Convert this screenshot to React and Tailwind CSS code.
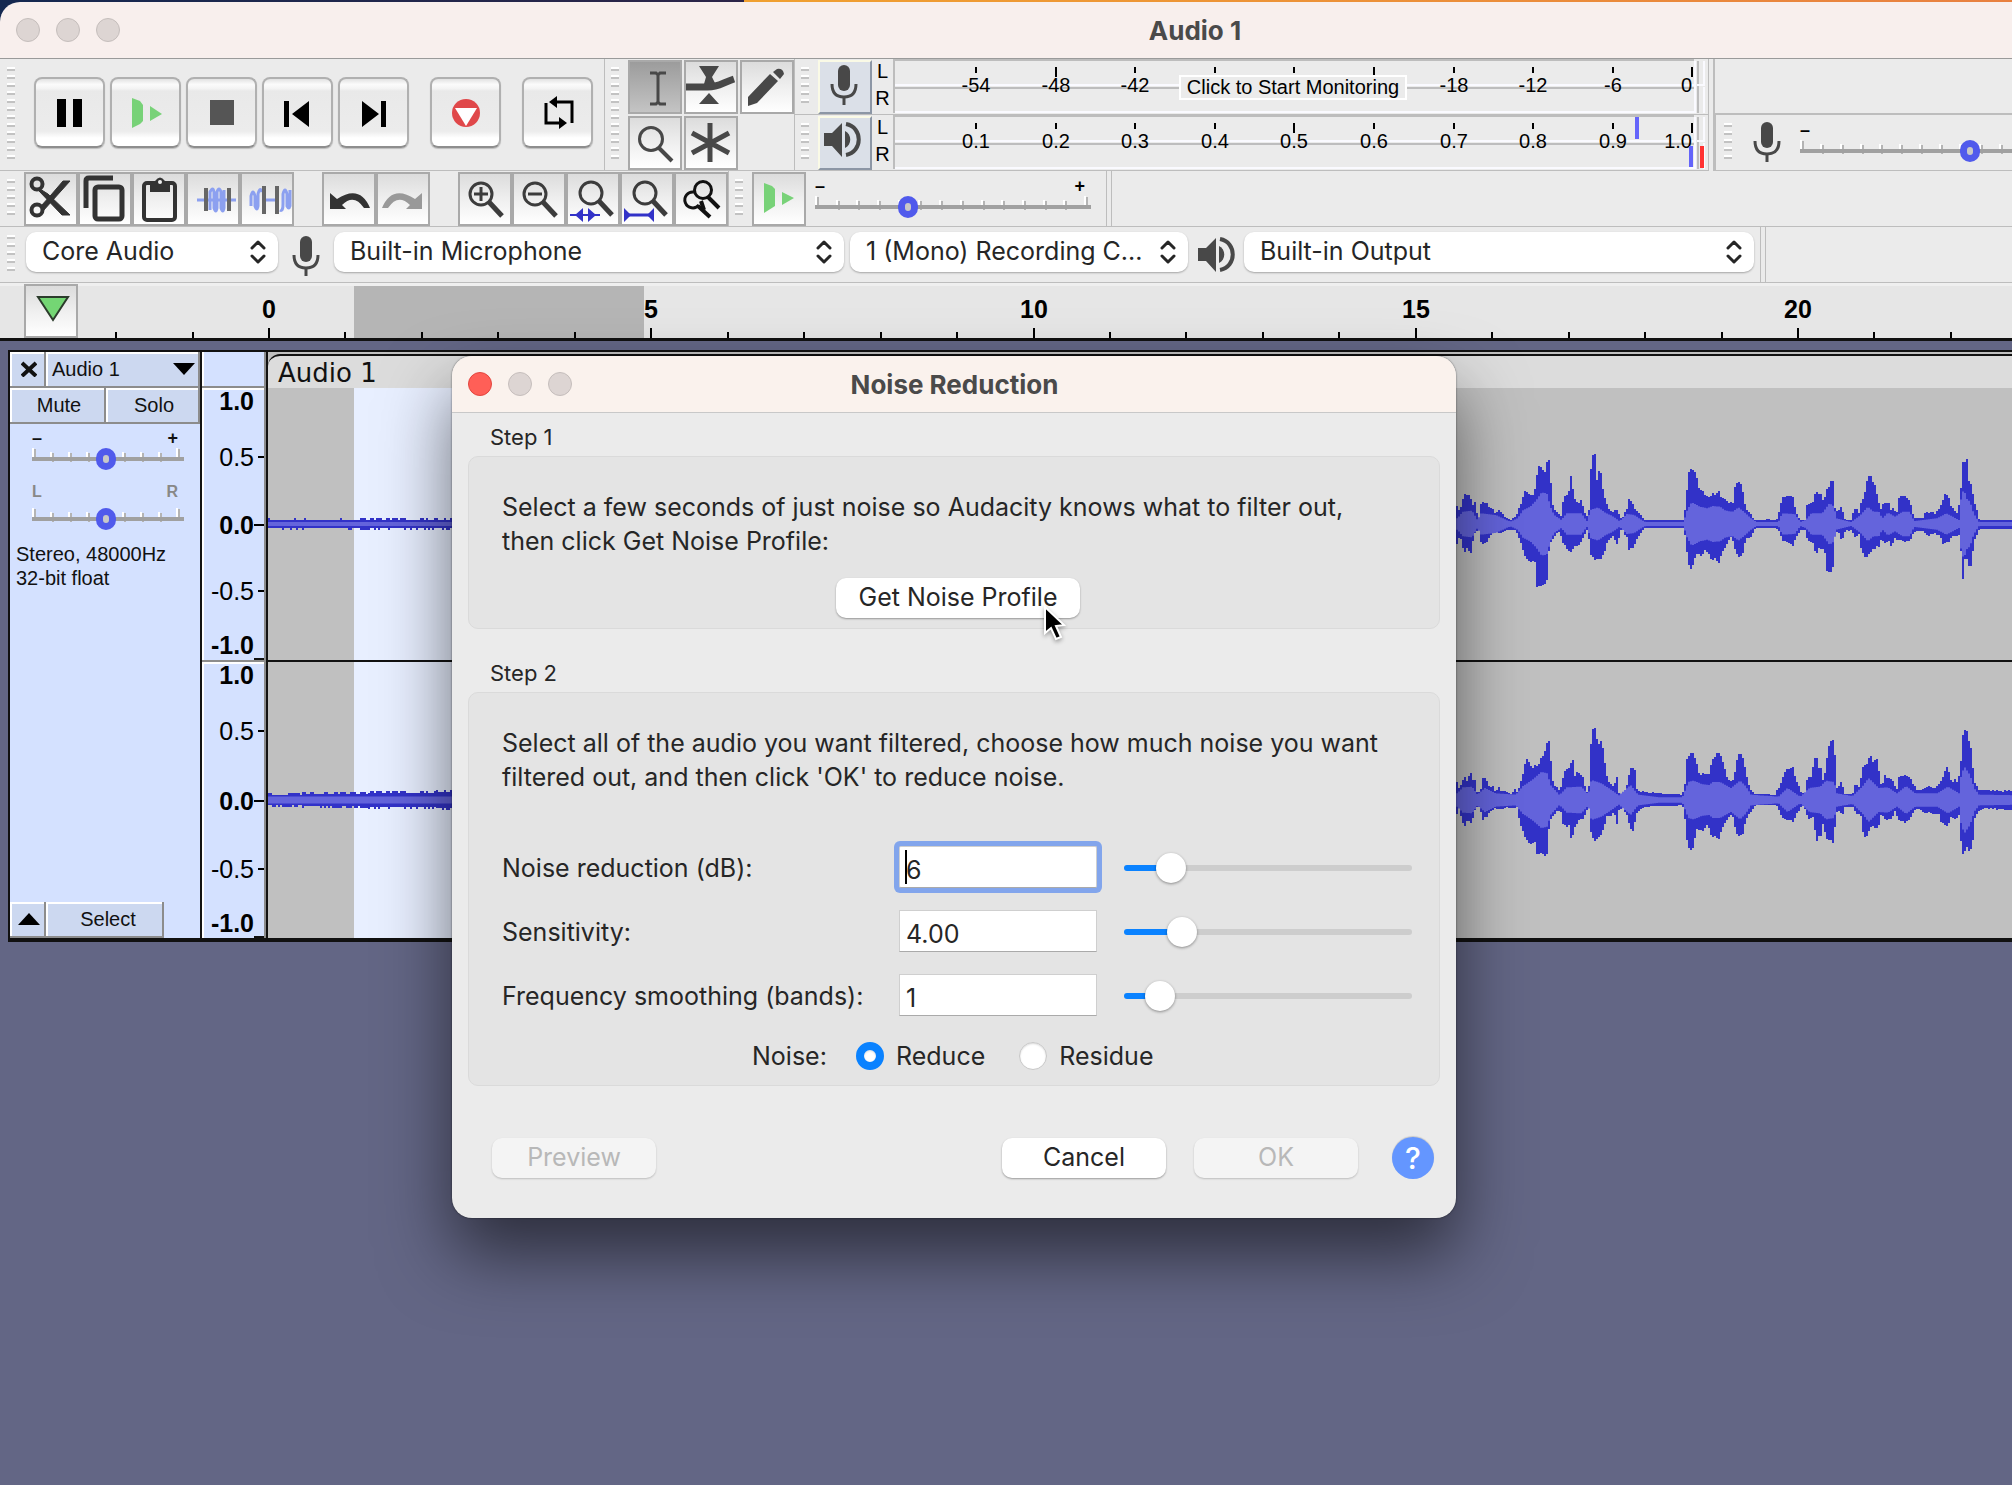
import React, { useState } from 'react';
import clsx from 'clsx';

const BLUE = '#3232c8';
const LIGHT_BLUE = '#6464dc';
const INK = '#484848';

// Clip envelopes: x/y pairs, y is measured around zero, 3 units to a pixel
const LEFT = {
  zero: 552,
  top: [45, 500, 52, 515, 60, 475, 66, 462, 75, 462, 80, 475, 90, 500, 96, 475, 98, 515, 105, 535, 110, 485, 125, 492, 140, 505, 150, 520, 158, 512, 170, 520, 180, 535, 190, 540, 205, 530, 215, 500, 222, 480, 232, 450, 240, 462, 250, 470, 258, 445, 264, 400, 270, 372, 278, 385, 285, 395, 288, 385, 293, 348, 300, 372, 303, 485, 308, 498, 315, 520, 320, 510, 328, 535, 332, 500, 338, 468, 350, 465, 352, 440, 358, 396, 361, 440, 368, 480, 380, 487, 387, 475, 390, 510, 400, 530, 405, 535, 407, 458, 412, 372, 418, 336, 425, 350, 428, 430, 433, 390, 442, 403, 445, 468, 453, 485, 460, 505, 470, 520, 480, 505, 487, 515, 490, 540, 500, 525, 508, 515, 516, 475, 525, 490, 535, 510, 550, 530, 560, 540, 665, 540, 668, 520, 675, 445, 680, 390, 687, 384, 700, 403, 705, 438, 715, 450, 725, 465, 735, 475, 745, 462, 755, 462, 760, 450, 768, 468, 780, 480, 790, 490, 800, 490, 806, 440, 812, 426, 826, 432, 830, 480, 838, 505, 850, 525, 860, 540, 893, 540, 896, 522, 900, 540, 916, 540, 918, 524, 922, 540, 928, 505, 938, 468, 960, 465, 965, 475, 972, 510, 980, 530, 985, 540, 998, 540, 1002, 500, 1012, 490, 1020, 485, 1027, 450, 1035, 460, 1043, 465, 1050, 485, 1055, 465, 1060, 432, 1065, 445, 1070, 420, 1079, 420, 1080, 510, 1090, 515, 1097, 500, 1103, 520, 1108, 540, 1125, 540, 1130, 515, 1138, 505, 1145, 520, 1152, 485, 1160, 470, 1165, 440, 1170, 408, 1176, 402, 1182, 420, 1190, 438, 1196, 465, 1202, 500, 1208, 510, 1212, 487, 1230, 487, 1233, 510, 1240, 500, 1248, 520, 1252, 515, 1256, 468, 1272, 468, 1280, 475, 1290, 500, 1297, 535, 1320, 535, 1328, 520, 1345, 515, 1355, 520, 1365, 505, 1375, 485, 1378, 462, 1390, 462, 1395, 490, 1405, 505, 1415, 520, 1422, 480, 1425, 450, 1430, 366, 1440, 366, 1444, 348, 1447, 420, 1455, 432, 1460, 480, 1467, 500, 1475, 540, 1600, 540],
  bottom: [45, 610, 52, 585, 60, 620, 62, 648, 70, 625, 85, 640, 88, 600, 92, 580, 105, 568, 110, 612, 125, 605, 135, 590, 145, 575, 165, 580, 180, 570, 205, 570, 215, 600, 225, 630, 235, 660, 250, 665, 258, 665, 260, 738, 275, 740, 290, 730, 295, 640, 300, 610, 310, 590, 325, 575, 335, 610, 345, 625, 358, 640, 365, 620, 380, 618, 390, 590, 400, 570, 406, 600, 408, 640, 420, 660, 440, 658, 448, 635, 455, 610, 468, 590, 475, 585, 480, 622, 487, 600, 492, 570, 500, 575, 510, 590, 515, 628, 530, 622, 535, 600, 550, 575, 560, 564, 665, 564, 672, 600, 677, 670, 687, 694, 694, 660, 700, 640, 712, 650, 722, 630, 735, 640, 740, 658, 750, 655, 763, 670, 770, 640, 780, 620, 795, 588, 802, 610, 810, 640, 820, 652, 830, 635, 835, 600, 850, 590, 862, 564, 920, 564, 930, 580, 938, 605, 965, 615, 975, 590, 985, 570, 998, 570, 1005, 600, 1020, 610, 1028, 650, 1035, 625, 1045, 628, 1055, 640, 1058, 695, 1074, 695, 1076, 650, 1080, 580, 1092, 575, 1099, 610, 1105, 575, 1125, 570, 1135, 590, 1145, 580, 1152, 630, 1160, 648, 1170, 650, 1180, 630, 1195, 620, 1198, 640, 1203, 600, 1215, 610, 1228, 605, 1236, 628, 1242, 595, 1260, 600, 1275, 608, 1285, 600, 1300, 572, 1325, 572, 1335, 590, 1350, 580, 1370, 590, 1375, 615, 1390, 605, 1405, 590, 1420, 585, 1426, 640, 1428, 700, 1433, 730, 1436, 660, 1445, 655, 1449, 700, 1455, 670, 1460, 610, 1470, 580, 1477, 566, 1600, 566],
  rms: [45, 535, 60, 515, 85, 512, 100, 540, 110, 520, 150, 525, 190, 545, 210, 535, 225, 510, 245, 500, 262, 480, 275, 458, 290, 460, 300, 500, 310, 525, 330, 540, 345, 520, 385, 520, 400, 544, 410, 510, 430, 502, 450, 518, 470, 528, 490, 544, 510, 522, 530, 525, 550, 540, 560, 546, 665, 546, 675, 510, 687, 487, 710, 500, 730, 505, 745, 498, 765, 500, 780, 512, 800, 515, 815, 502, 830, 515, 850, 535, 865, 546, 925, 546, 935, 520, 970, 522, 985, 546, 1000, 540, 1015, 520, 1045, 520, 1058, 500, 1065, 490, 1078, 500, 1083, 535, 1125, 546, 1150, 525, 1170, 500, 1185, 515, 1200, 515, 1210, 535, 1225, 518, 1245, 530, 1265, 515, 1285, 515, 1297, 543, 1360, 535, 1385, 520, 1420, 540, 1425, 480, 1433, 445, 1440, 475, 1450, 485, 1460, 520, 1475, 546, 1600, 546],
};

const RIGHT = {
  zero: 420,
  top: [45, 368, 50, 385, 60, 360, 65, 360, 68, 324, 71, 360, 78, 348, 85, 336, 89, 368, 96, 355, 98, 396, 108, 400, 112, 360, 118, 348, 125, 362, 133, 378, 145, 380, 150, 396, 158, 380, 165, 392, 182, 392, 190, 404, 198, 396, 205, 386, 210, 400, 216, 372, 225, 340, 232, 306, 238, 288, 242, 312, 250, 325, 260, 312, 266, 325, 272, 294, 282, 282, 288, 264, 293, 234, 300, 252, 303, 354, 312, 378, 320, 380, 326, 396, 332, 368, 340, 330, 352, 325, 356, 325, 358, 228, 361, 288, 366, 345, 370, 348, 375, 324, 380, 342, 388, 345, 392, 372, 400, 396, 405, 396, 408, 306, 412, 234, 418, 198, 426, 210, 430, 276, 435, 234, 442, 246, 448, 300, 455, 348, 462, 368, 475, 384, 480, 348, 486, 354, 488, 402, 500, 402, 508, 385, 515, 350, 517, 320, 535, 330, 537, 385, 545, 400, 555, 394, 600, 400, 660, 404, 668, 384, 675, 290, 683, 282, 688, 270, 696, 294, 705, 320, 708, 342, 728, 342, 735, 345, 738, 318, 750, 290, 760, 276, 770, 288, 776, 320, 785, 354, 795, 366, 805, 350, 808, 306, 818, 282, 826, 284, 834, 320, 842, 366, 850, 394, 862, 403, 893, 403, 896, 390, 900, 406, 915, 406, 920, 392, 930, 378, 938, 348, 945, 325, 958, 325, 962, 312, 968, 340, 978, 372, 988, 396, 998, 404, 1005, 350, 1018, 352, 1021, 294, 1030, 290, 1036, 320, 1045, 330, 1048, 370, 1055, 325, 1060, 270, 1072, 234, 1079, 246, 1082, 372, 1088, 390, 1099, 360, 1104, 400, 1128, 404, 1135, 375, 1148, 378, 1153, 340, 1159, 306, 1165, 325, 1176, 282, 1184, 306, 1198, 294, 1202, 360, 1210, 380, 1215, 338, 1220, 352, 1235, 355, 1242, 368, 1250, 390, 1256, 350, 1275, 344, 1285, 355, 1295, 370, 1303, 388, 1325, 388, 1340, 375, 1350, 388, 1362, 374, 1372, 360, 1380, 336, 1388, 318, 1395, 350, 1402, 366, 1410, 354, 1416, 372, 1424, 320, 1432, 210, 1441, 210, 1448, 246, 1455, 270, 1458, 325, 1464, 372, 1475, 390, 1600, 396],
  bottom: [45, 460, 50, 445, 58, 485, 64, 502, 74, 480, 85, 490, 92, 455, 98, 440, 108, 440, 112, 485, 120, 472, 132, 462, 145, 445, 165, 448, 182, 443, 210, 443, 216, 495, 228, 520, 234, 540, 250, 555, 258, 545, 260, 580, 278, 582, 284, 592, 291, 580, 294, 520, 302, 475, 312, 460, 328, 450, 334, 490, 345, 500, 352, 495, 353, 532, 360, 538, 366, 505, 380, 480, 390, 474, 400, 450, 406, 440, 408, 505, 414, 530, 420, 544, 430, 538, 441, 525, 446, 500, 456, 465, 462, 474, 475, 450, 482, 497, 488, 450, 500, 445, 510, 465, 516, 490, 524, 520, 530, 500, 536, 460, 548, 445, 560, 440, 662, 436, 670, 480, 676, 562, 688, 575, 694, 550, 700, 505, 710, 515, 725, 505, 732, 485, 738, 525, 762, 538, 770, 510, 780, 485, 797, 460, 804, 490, 812, 525, 827, 526, 834, 490, 845, 462, 862, 436, 920, 436, 930, 460, 940, 480, 966, 484, 975, 462, 990, 434, 1000, 450, 1008, 478, 1020, 470, 1025, 510, 1028, 550, 1035, 530, 1045, 525, 1048, 480, 1056, 538, 1070, 540, 1073, 556, 1078, 538, 1082, 462, 1095, 445, 1099, 485, 1104, 440, 1128, 440, 1140, 460, 1152, 470, 1158, 530, 1170, 525, 1180, 495, 1198, 508, 1205, 465, 1220, 480, 1235, 480, 1245, 455, 1256, 480, 1275, 488, 1290, 468, 1300, 448, 1325, 455, 1345, 460, 1365, 465, 1372, 490, 1390, 500, 1395, 474, 1410, 480, 1420, 465, 1426, 555, 1433, 592, 1440, 555, 1450, 580, 1457, 555, 1462, 480, 1472, 455, 1485, 445, 1600, 450],
  rms: [45, 400, 60, 382, 85, 380, 100, 404, 120, 384, 150, 400, 205, 404, 225, 378, 250, 360, 275, 336, 292, 340, 300, 375, 325, 405, 345, 382, 385, 380, 404, 404, 412, 360, 440, 370, 470, 392, 488, 406, 520, 375, 540, 404, 600, 412, 662, 412, 678, 366, 692, 362, 715, 372, 735, 375, 745, 366, 765, 366, 795, 384, 820, 362, 835, 378, 850, 404, 925, 410, 950, 384, 985, 410, 1010, 384, 1040, 380, 1055, 362, 1078, 366, 1085, 400, 1128, 408, 1155, 380, 1172, 354, 1200, 384, 1225, 382, 1250, 400, 1275, 378, 1300, 400, 1360, 400, 1390, 380, 1420, 400, 1426, 345, 1435, 320, 1450, 345, 1462, 385, 1475, 404, 1600, 406],
};

const SPEECH_START = 1172;
const UNITS_PER_PX = 2.741;

const sample = (points, x) => {
  for (let i = 2; i < points.length; i += 2) {
    if (x <= points[i]) {
      const t = Math.max(0, (x - points[i - 2]) / (points[i] - points[i - 2]));
      return points[i - 1] + t * (points[i + 1] - points[i - 1]);
    }
  }
  return points[points.length - 1];
};

const stepPath = (center, upper, lower) => {
  const cols = [];
  for (let x = 0; x < 1760; x += 2) cols.push(x);
  const top = cols.map((x) => `L${x} ${center - upper(x)}H${x + 2}`).join('');
  const bottom = [...cols].reverse().map((x) => `L${x + 2} ${center + lower(x)}H${x}`).join('');
  return `M0 ${center}${top}${bottom}Z`;
};

const noise = (x) => Math.abs(Math.sin(x * 12.9898) * 43758.5453) % 1;

function Waveform({ center, channel, quiet, growth }) {
  const level = (points, sign) => (x) => {
    if (x < SPEECH_START + 16) {
      const base = quiet + (growth * Math.min(x, 200)) / 200;
      const spiky = noise(x + sign) > (x > 90 ? 0.6 : 0.85 - growth * 0.1);
      return Math.round(base + (spiky ? 2 : 0));
    }
    const raw = Math.abs(sample(points, (x - SPEECH_START) * UNITS_PER_PX) - channel.zero) / 3;
    return Math.round(raw > 7 ? raw + (noise(x) - 0.5) * 2 : raw);
  };
  const rms = (x) => {
    if (x < SPEECH_START + 16) return 2 + growth / 2;
    return (channel.zero - sample(channel.rms, (x - SPEECH_START) * UNITS_PER_PX)) / 3;
  };
  return (
    <g>
      <path d={stepPath(center, level(channel.top, 1), level(channel.bottom, 2))} fill={BLUE} />
      <path d={stepPath(center, rms, rms)} fill={LIGHT_BLUE} />
    </g>
  );
}

function Grip({ tall }) {
  return (
    <div
      className={clsx(
        'w-2 shrink-0 bg-[repeating-linear-gradient(to_bottom,#ffffff_0_2px,#c2c2c2_2px_4px,transparent_4px_8px)]',
        tall ? 'h-[92px]' : 'h-[36px]'
      )}
    />
  );
}

function TransportButton({ label, className, children }) {
  return (
    <button
      aria-label={label}
      className={clsx(
        'size-[71px] shrink-0 rounded-lg border-2 border-[#b0b0b0] border-b-[#8e8e8e] bg-[linear-gradient(#e2e2e2,#fbfbfb_8%,#f4f4f4_14%,#e9e9e9_18%,#ececec_78%,#ffffff_88%,#ffffff)] shadow-[0_1px_1px_rgba(0,0,0,0.2)]',
        className
      )}
    >
      <svg viewBox="2 2 67 67" className="size-full">{children}</svg>
    </button>
  );
}

function ToolButton({ label, active, children }) {
  return (
    <button
      aria-label={label}
      className={clsx(
        'size-[54px] shrink-0 border-2 border-[#a9a9a9]',
        active
          ? 'bg-linear-to-b from-[#9c9c9c] to-[#c4c4c4]'
          : 'bg-linear-to-b from-[#dcdcdc] via-[#efefef] to-white'
      )}
    >
      <svg viewBox="2 2 50 50" className="size-full" fill="none">{children}</svg>
    </button>
  );
}

function MicShape() {
  return (
    <g stroke={INK} fill="none">
      <rect x="20" y="5" width="12" height="26" rx="6" fill={INK} stroke="none" />
      <path d="M14 24C14 34 19 37 26 37S38 34 38 24" strokeWidth="3" />
      <path d="M26 37V45" strokeWidth="3" />
    </g>
  );
}

function SpeakerShape() {
  return (
    <g stroke={INK} fill="none">
      <path d="M6 17H14L24 7V41L14 30H6Z" fill={INK} stroke="none" />
      <path d="M27 15C34 18 34 29 27 32Z" fill={INK} stroke="none" />
      <path d="M28 8C45 11 45 36 28 39" strokeWidth="4" />
    </g>
  );
}

function PlayShape() {
  return (
    <g fill="#78d278">
      <path d="M12 11L20 14L23 17V34L12 41Z" />
      <path d="M30 20L42 26L30 33Z" />
    </g>
  );
}

function Lens({ cx = 23, cy = 22, r = 11, children }) {
  return (
    <g stroke="#3c3c3c">
      <circle cx={cx} cy={cy} r={r} strokeWidth="3" />
      <path d={`M${cx + 8} ${cy + 8}L${cx + 21} ${cy + 22}`} strokeWidth="5" />
      {children}
    </g>
  );
}

function Ticks({ count, width }) {
  const step = (width - 10) / (count - 1);
  return (
    <svg className="h-[22px] w-full [grid-area:1/1]" aria-hidden="true">
      {Array.from({ length: count }, (_, i) => {
        const x = Math.round(2 + i * step);
        const y = i === 0 || i === count - 1 ? 0 : 4;
        return (
          <g key={i}>
            <rect x={x - 2} y={y} width="2" height="9" fill="#fff" />
            <rect x={x} y={y + 1} width="2" height="9" fill="#b4b4b4" />
          </g>
        );
      })}
      <rect y="9" width="100%" height="4" fill="#a0a0a0" />
    </svg>
  );
}

function MeterSlider({ label, value, count, width }) {
  const [v, setV] = useState(value);
  return (
    <div className="grid w-full">
      <Ticks count={count} width={width} />
      <input
        type="range"
        aria-label={label}
        value={v}
        step="0.1"
        onChange={(e) => setV(e.target.value)}
        className="h-[22px] w-full appearance-none bg-transparent [grid-area:1/1] [&::-webkit-slider-thumb]:h-[22px] [&::-webkit-slider-thumb]:w-5 [&::-webkit-slider-thumb]:appearance-none [&::-webkit-slider-thumb]:rounded-full [&::-webkit-slider-thumb]:border-[7px] [&::-webkit-slider-thumb]:border-[#505aec] [&::-webkit-slider-thumb]:bg-[#c8c8c8]"
      />
    </div>
  );
}

function Meter({ label, icon, ticks, long, hidden = [], children }) {
  return (
    <div className="flex h-14 border-b border-[#bdbdbd] pl-1.5">
      <div className="pt-2"><Grip /></div>
      <button
        aria-label={label}
        className="mt-px ml-[9px] size-[54px] border-2 border-t-[#fafae6] border-r-[#8c96a5] border-b-[#8c96a5] border-l-[#fafae6] bg-[#dbe0e8]"
      >
        <svg viewBox="2 2 50 50" className="size-full">{icon}</svg>
      </button>
      <div className="flex w-[21px] flex-col items-center text-xl leading-6">
        <span className="h-[27px]">L</span>
        <span>R</span>
      </div>
      <svg className="h-[55px] w-[812px]" fontSize="20">
        <path d="M1 54V1H801" stroke="#bdbdbd" strokeWidth="2" fill="none" />
        <path d="M2 26H801M2 53H802V2" stroke="#fafaff" strokeWidth="2" fill="none" />
        <path d="M0 29H801" stroke="#bdbdbd" strokeWidth="2" />
        <path d="M805 54V2" stroke="#bdbdbd" strokeWidth="2" />
        <path d="M804 26H811V2M811 28V54" stroke="#fafaff" strokeWidth="2" fill="none" />
        {ticks.map((t, i) => {
          const x = 83 + Math.round(i * 79.6);
          return (
            <g key={t}>
              <rect x={x - 1} y="8" width="2" height={long.includes(i) ? 10 : 6} />
              {!hidden.includes(i) && (
                <text x={x} y="33" textAnchor={i === ticks.length - 1 ? 'end' : 'middle'}>{t}</text>
              )}
            </g>
          );
        })}
        {children}
      </svg>
    </div>
  );
}

function Picker({ label, value, className }) {
  return (
    <div className={clsx('relative h-10', className)}>
      <select
        aria-label={label}
        className="h-10 w-full appearance-none rounded-[10px] bg-white pl-4 text-[25px] text-[#262626] shadow-[0_1px_2px_rgba(0,0,0,0.3)]"
      >
        <option>{value}</option>
      </select>
      <svg className="pointer-events-none absolute top-2 right-3 h-6 w-4" fill="none" stroke="#262626" strokeWidth="3" strokeLinecap="round" strokeLinejoin="round">
        <path d="M2 8L8 2L14 8M2 16L8 22L14 16" />
      </svg>
    </div>
  );
}

function Toolbars() {
  return (
    <div className="bg-[#ebebeb]">
      <div className="flex">
        <div className="flex h-28 w-[605px] shrink-0 border-r border-b border-[#bdbdbd] pl-[7px]">
          <div className="pt-2"><Grip tall /></div>
          <div className="flex gap-[5px] pt-[18px] pl-[19px]">
            <TransportButton label="Pause">
              <path d="M23 22H32V50H23ZM39 22H48V50H39Z" />
            </TransportButton>
            <TransportButton label="Play">
              <path d="M22 21L30 24L33 28V44L30 47L22 51ZM40 29L52 37L40 44Z" fill="#78d278" />
            </TransportButton>
            <TransportButton label="Stop">
              <path d="M24 23H48V48H24Z" fill="#555" />
            </TransportButton>
            <TransportButton label="Skip to Start">
              <path d="M22 24H27V50H22ZM47 24V50L30 37Z" />
            </TransportButton>
            <TransportButton label="Skip to End">
              <path d="M43 24H48V50H43ZM24 24V50L41 37Z" />
            </TransportButton>
            <TransportButton label="Record" className="ml-4">
              <circle cx="36" cy="36" r="14" fill="#e0484a" />
              <path d="M25 31H47L36 49Z" fill="#fff" />
            </TransportButton>
            <TransportButton label="Loop" className="ml-4">
              <path d="M24 26V46H41M50 46V25H32" fill="none" stroke="#000" strokeWidth="3" />
              <path d="M37 40L45 46L37 52ZM35 19L27 25L35 31Z" />
            </TransportButton>
          </div>
        </div>

        <div className="flex h-28 w-[190px] shrink-0 border-r border-b border-[#bdbdbd] pl-1.5">
          <div className="pt-2"><Grip tall /></div>
          <div className="grid grid-cols-3 content-start gap-0.5 pt-px pl-[9px]">
            <ToolButton label="Selection Tool" active>
              <path d="M22 13H28L30 15L32 13H38M22 44H28L30 42L32 44H38M30 14V43" stroke={INK} strokeWidth="3" />
            </ToolButton>
            <ToolButton label="Envelope Tool">
              <path d="M15 6H35L28 17L31 23L26 28H22L20 24L22 17ZM25 33L35 44H15Z" fill={INK} />
              <path d="M2 27H24C34 27 38 23 50 19" stroke={INK} strokeWidth="7" />
            </ToolButton>
            <ToolButton label="Draw Tool">
              <path d="M8 46V37L30 14L38 21L17 43ZM33 12L37 9Q43 8 44 14L40 19Z" fill={INK} />
            </ToolButton>
            <ToolButton label="Zoom Tool">
              <g stroke={INK}>
                <circle cx="23" cy="23" r="11.5" strokeWidth="3" />
                <path d="M31 32L44 45" strokeWidth="4" />
              </g>
            </ToolButton>
            <ToolButton label="Multi-Tool">
              <path d="M26 7V46M8 17L45 37M45 17L8 37" stroke={INK} strokeWidth="5" />
            </ToolButton>
          </div>
        </div>

        <div className="w-[914px] shrink-0 border-r border-[#bdbdbd]">
          <Meter
            label="Record Meter"
            icon={<MicShape />}
            ticks={['-54', '-48', '-42', '-36', '-30', '-24', '-18', '-12', '-6', '0']}
            long={[1, 5, 9]}
            hidden={[3, 4, 5]}
          >
            <rect x="287" y="17" width="226" height="23" fill="#ebebeb" stroke="#fff" strokeWidth="2" />
            <text x="400" y="35" textAnchor="middle">Click to Start Monitoring</text>
          </Meter>
          <Meter
            label="Playback Meter"
            icon={<SpeakerShape />}
            ticks={['0.1', '0.2', '0.3', '0.4', '0.5', '0.6', '0.7', '0.8', '0.9', '1.0']}
            long={[4, 9]}
          >
            <rect x="742" y="2" width="4" height="22" fill="#6464fa" />
            <rect x="796" y="31" width="4" height="21" fill="#6464fa" />
            <rect x="807" y="31" width="4" height="22" fill="#ff3232" />
          </Meter>
        </div>

        <div className="ml-1 min-w-0 flex-1 overflow-hidden border-l-2 border-[#bdbdbd]">
          <div className="h-14 border-b-2 border-[#bdbdbd]" />
          <div className="flex h-14 border-b border-l border-[#bdbdbd] pl-2">
            <div className="pt-2"><Grip /></div>
            <svg className="mt-0.5 ml-[9px] h-[54px] w-[54px] shrink-0" aria-hidden="true"><MicShape /></svg>
            <div className="w-[300px] shrink-0 pt-[5px] pl-[5px]">
              <div className="h-5 text-lg leading-5 font-bold">–</div>
              <MeterSlider label="Recording Volume" value={58.2} count={16} width={308} />
            </div>
          </div>
        </div>
      </div>

      <div className="flex h-14 border-b border-[#bdbdbd] pl-[7px]">
        <div className="pt-2"><Grip /></div>
        <div className="flex pt-px pl-[9px]">
          <ToolButton label="Cut">
            <g stroke="#333">
              <circle cx="13" cy="12" r="5.5" strokeWidth="4" />
              <circle cx="13" cy="38" r="5.5" strokeWidth="4" />
              <path d="M17 34L27 23L39 9H46L19 39ZM16 17L24 22L46 43H38L15 19Z" fill="#333" strokeWidth="1" />
            </g>
          </ToolButton>
          <ToolButton label="Copy">
            <path d="M8 36V9Q8 6 11 6H35" stroke="#333" strokeWidth="5" />
            <rect x="17" y="15" width="27" height="32" rx="3" stroke="#333" strokeWidth="5" />
          </ToolButton>
          <ToolButton label="Paste">
            <rect x="12" y="11" width="31" height="37" rx="3" stroke="#333" strokeWidth="4" />
            <path d="M18 9H23Q28 2 33 9H38V20H18Z" fill="#333" />
            <circle cx="28" cy="10" r="2" fill="#eee" />
          </ToolButton>
          <ToolButton label="Trim">
            <path d="M11 28H50" stroke="#8ca0f0" strokeWidth="3" />
            <path d="M24 38V20Q27 14 28 20V36Q30 42 31 36V20Q33 14 35 20V36Q37 42 38 36V18" stroke="#8ca0f0" strokeWidth="3" />
            <path d="M20 16V39M43 16V39" stroke="#666" strokeWidth="4" />
          </ToolButton>
          <ToolButton label="Silence">
            <path d="M11 34V24Q13 16 15 24V34Q17 40 18 34V22Q20 14 22 20M24 28H37M40 38Q43 40 43 32V22Q45 14 47 22V34Q49 38 50 34V18" stroke="#8ca0f0" strokeWidth="3" />
            <path d="M24 14V42M37 14V42" stroke="#666" strokeWidth="4" />
          </ToolButton>
        </div>
        <div className="flex pt-px pl-7">
          <ToolButton label="Undo">
            <path d="M8 21V37H24L20 33Q32 21 42 36H48Q38 12 15 27Z" fill="#333" />
          </ToolButton>
          <ToolButton label="Redo">
            <path d="M46 21V37H30L34 33Q22 21 12 36H6Q16 12 39 27Z" fill="#999" />
          </ToolButton>
        </div>
        <div className="flex border-r border-[#bdbdbd] pt-px pl-7">
          <ToolButton label="Zoom In">
            <Lens><path d="M16 22H30M23 15V29" strokeWidth="3" /></Lens>
          </ToolButton>
          <ToolButton label="Zoom Out">
            <Lens><path d="M16 22H30" strokeWidth="3" /></Lens>
          </ToolButton>
          <ToolButton label="Fit Selection">
            <Lens cx={25} cy={21} />
            <path d="M4 43H34" stroke={BLUE} strokeWidth="2" />
            <path d="M9 43L17 36V50ZM30 43L22 36V50Z" fill={BLUE} />
          </ToolButton>
          <ToolButton label="Fit Project">
            <Lens cx={25} cy={21} />
            <path d="M4 43H34" stroke={BLUE} strokeWidth="3" />
            <path d="M4 36V50L11 43ZM34 36V50L27 43Z" fill={BLUE} />
          </ToolButton>
          <ToolButton label="Zoom Toggle">
            <g stroke="#111">
              <path d="M20 20A8 8 0 1 0 25 33" strokeWidth="3" />
              <path d="M24 34L36 45" strokeWidth="4" />
              <circle cx="29" cy="18" r="8.5" strokeWidth="3" />
              <path d="M34 25L45 36M27 29L30 38" strokeWidth="4" />
            </g>
          </ToolButton>
        </div>
        <div className="flex pl-1.5">
          <div className="pt-2"><Grip /></div>
          <div className="pt-px pl-[9px]">
            <ToolButton label="Play at Speed"><PlayShape /></ToolButton>
          </div>
          <div className="w-[285px] pt-[5px] pl-[9px]">
            <div className="flex h-5 justify-between pr-1.5 text-lg leading-5 font-bold"><span>–</span><span>+</span></div>
            <MeterSlider label="Playback Speed" value={32.4} count={14} width={279} />
          </div>
        </div>
        <div className="ml-[15px] w-1.5 border-x border-[#bdbdbd]" />
      </div>

      <div className="flex h-14 border-b border-[#bdbdbd] pl-[7px]">
        <div className="pt-2"><Grip /></div>
        <div className="flex pt-[5px] pl-[11px]">
          <Picker label="Audio Host" value="Core Audio" className="w-[252px]" />
          <svg className="mx-0.5 h-[50px] w-[52px]" viewBox="0 1 52 50" aria-hidden="true"><MicShape /></svg>
          <Picker label="Recording Device" value="Built-in Microphone" className="w-[510px]" />
          <Picker label="Recording Channels" value="1 (Mono) Recording C..." className="ml-1.5 w-[338px]" />
          <svg className="mx-0.5 h-[50px] w-[52px]" viewBox="-2 1 52 50" aria-hidden="true"><SpeakerShape /></svg>
          <Picker label="Playback Device" value="Built-in Output" className="w-[510px]" />
        </div>
        <div className="ml-1.5 w-1.5 border-x border-[#bdbdbd]" />
      </div>
    </div>
  );
}

function Timeline() {
  const ticks = Array.from({ length: 27 }, (_, i) => i - 3);
  return (
    <div className="flex h-[58px] border-b-[3px] border-[#111] bg-[#e6e6e6]">
      <svg className="h-[55px] w-full">
        <rect width="100%" height="3" fill="#efefef" />
        <rect x="354" y="3" width="290" height="52" fill="#b5b5b5" />
        {ticks.map((t) => {
          const x = 269 + Math.round(t * 76.45);
          const major = t % 5 === 0;
          return (
            <g key={t}>
              <rect x={x - 1} y={major ? 45 : 49} width="2" height="10" />
              {major && (
                <text x={x} y="35" textAnchor="middle" fontSize="25" fontWeight="700">{t}</text>
              )}
            </g>
          );
        })}
      </svg>
      <div className="absolute mt-px ml-6">
        <ToolButton label="Pinned Play Head">
          <path d="M14 13H44L29 36Z" fill="#74d674" stroke="#2c3c2c" strokeWidth="2" />
        </ToolButton>
      </div>
    </div>
  );
}

function PanelButton({ label, className, children }) {
  return (
    <button
      aria-label={label}
      className={clsx(
        'flex items-center border-r-2 border-b-2 border-[#8c8c8c] bg-[#ccd8f0] text-xl shadow-[inset_2px_2px_0_#fff]',
        className
      )}
    >
      {children}
    </button>
  );
}

function TrackPanel() {
  return (
    <div className="flex w-[192px] shrink-0 flex-col border-r-2 border-[#141414] bg-[#d4e1ff] text-[#111]">
      <div className="flex h-9">
        <PanelButton label="Close" className="w-9 justify-center pl-1">
          <svg className="size-4" stroke="#111" strokeWidth="4"><path d="M1 2L15 15M15 2L1 15" /></svg>
        </PanelButton>
        <PanelButton className="flex-1 justify-between pr-0.5 pl-1.5">
          Audio 1
          <svg className="h-3 w-6"><path d="M1 0H23L12 12Z" /></svg>
        </PanelButton>
      </div>
      <div className="flex h-9">
        <PanelButton className="w-24 justify-center pl-1">Mute</PanelButton>
        <PanelButton className="flex-1 justify-center pl-1">Solo</PanelButton>
      </div>
      <div className="w-[174px] pt-1 pl-[22px]">
        <div className="flex h-5 justify-between pr-1.5 text-lg leading-5 font-bold"><span>–</span><span>+</span></div>
        <MeterSlider label="Gain" value={48.5} count={9} width={154} />
        <div className="mt-3 flex h-[26px] justify-between pr-1.5 text-base leading-5 font-bold text-[#888]"><span>L</span><span>R</span></div>
        <MeterSlider label="Pan" value={48.5} count={9} width={154} />
      </div>
      <p className="mt-3 pl-1.5 text-xl leading-6">Stereo, 48000Hz<br />32-bit float</p>
      <div className="mt-auto flex h-9">
        <PanelButton label="Collapse" className="w-9 justify-center pl-1">
          <svg className="h-3 w-6"><path d="M1 12H23L12 0Z" /></svg>
        </PanelButton>
        <PanelButton className="w-[118px] justify-center pl-2">Select</PanelButton>
      </div>
    </div>
  );
}

const SCALE = [
  { text: '1.0', y: 49 },
  { text: '0.5', y: 105, tick: 6 },
  { text: '0.0', y: 173, tick: 10 },
  { text: '-0.5', y: 239, tick: 6 },
  { text: '-1.0', y: 293 },
  { text: '1.0', y: 323 },
  { text: '0.5', y: 379, tick: 6 },
  { text: '0.0', y: 449, tick: 10 },
  { text: '-0.5', y: 517, tick: 6 },
  { text: '-1.0', y: 571 },
];

function Track() {
  return (
    <div className="mt-[9px] ml-2 flex h-[592px] border-t-2 border-b-4 border-l-2 border-[#111]">
      <TrackPanel />
      <svg className="h-full w-[66px] shrink-0 bg-[#d4e1ff]" fontSize="25">
        <path d="M1 0V586" stroke="#fff" strokeWidth="2" />
        <path d="M0 35H62M0 309H62" stroke="#8c8c8c" strokeWidth="2" />
        <path d="M2 37H62M2 311H62" stroke="#fff" strokeWidth="2" />
        <path d="M63 0V586" stroke="#8c8c8c" strokeWidth="2" />
        <path d="M65 0V586" stroke="#111" strokeWidth="2" />
        <path d="M52 307H62M52 585H62" stroke="#111" strokeWidth="2" />
        {SCALE.map((s) => (
          <g key={s.y}>
            <text x="52" y={s.y + 9} textAnchor="end" fontWeight={s.text.endsWith('.5') ? 400 : 700}>{s.text}</text>
            {s.tick && <rect x={62 - s.tick} y={s.y - 1} width={s.tick} height="2" />}
          </g>
        ))}
      </svg>
      <div className="min-w-0 flex-1 bg-[#c0c0c0] pt-0.5">
        <div className="h-[34px] rounded-tl-xl border-t-2 border-[#111] bg-[#dcdcdc] pl-2.5 font-['DejaVu_Sans'] text-[26px] leading-[34px] text-[#111]">
          Audio 1
        </div>
        <svg className="h-[550px] w-full">
          <rect x="86" width="289" height="100%" fill="#e8efff" />
          <rect y="272" width="100%" height="2" fill="#111" />
          <Waveform center={136} channel={LEFT} quiet={4} growth={0} />
          <Waveform center={412} channel={RIGHT} quiet={5} growth={3} />
        </svg>
      </div>
    </div>
  );
}

function TrafficLights({ close }) {
  return (
    <div className="flex gap-4">
      <span className={clsx('size-6 rounded-full border', close)} />
      <span className="size-6 rounded-full border border-[#c5bebc] bg-[#ddd5d3]" />
      <span className="size-6 rounded-full border border-[#c5bebc] bg-[#ddd5d3]" />
    </div>
  );
}

function EffectRow({ id, label, value, min, max, position, focused }) {
  const [text, setText] = useState(value);
  const [pos, setPos] = useState(position);
  const fill = 15 + ((pos - min) / (max - min)) * 258;
  return (
    <div className="grid h-16 grid-cols-[397px_198px_1fr] items-center">
      <label htmlFor={id} className="pt-0.5">{label}</label>
      <div className="relative">
        <input
          id={id}
          value={text}
          onChange={(e) => setText(e.target.value)}
          className={clsx(
            'h-[42px] w-full border border-[#cfcfcf] border-b-[#aaa] bg-white pt-1.5 pl-1.5 outline-none',
            focused && 'rounded-[2px] ring-[5px] ring-[#82a5ec]'
          )}
        />
        {focused && <span className="absolute top-1 left-1.5 h-[34px] w-0.5 bg-black" />}
      </div>
      <input
        type="range"
        aria-label={label}
        min={min}
        max={max}
        step="0.1"
        value={pos}
        onChange={(e) => setPos(Number(e.target.value))}
        style={{ backgroundSize: `${fill}px 100%` }}
        className="ml-[27px] h-1.5 appearance-none rounded-full bg-[#cdcdcd] bg-[linear-gradient(#0a82ff,#0a82ff)] bg-no-repeat [&::-webkit-slider-thumb]:size-[30px] [&::-webkit-slider-thumb]:appearance-none [&::-webkit-slider-thumb]:rounded-full [&::-webkit-slider-thumb]:bg-white [&::-webkit-slider-thumb]:shadow-[0_1px_3px_rgba(0,0,0,0.4)]"
      />
    </div>
  );
}

function NoiseRadio({ label, checked, onChange }) {
  return (
    <label className="flex items-center gap-3">
      <input
        type="radio"
        name="noise"
        checked={checked}
        onChange={onChange}
        className="size-7 appearance-none rounded-full border border-[#c8c8c8] bg-white shadow-[inset_0_1px_2px_rgba(0,0,0,0.15)] checked:border-8 checked:border-[#0a82ff]"
      />
      <span className="pt-0.5">{label}</span>
    </label>
  );
}

function DialogButton({ disabled, className, children }) {
  return (
    <button
      disabled={disabled}
      className={clsx(
        'h-10 rounded-[10px] bg-white shadow-[0_1px_2px_rgba(0,0,0,0.35)] disabled:bg-[#f4f4f4] disabled:text-[#b8b8b8] disabled:shadow-[0_1px_2px_rgba(0,0,0,0.2)]',
        className
      )}
    >
      {children}
    </button>
  );
}

function NoiseReductionDialog() {
  const [noiseMode, setNoiseMode] = useState('Reduce');
  return (
    <div
      role="dialog"
      aria-label="Noise Reduction"
      className="absolute top-[356px] left-[452px] w-[1004px] overflow-hidden rounded-[20px] bg-[#ebebeb] text-[25px] text-[#262626] shadow-[0_0_2px_rgba(0,0,0,0.6),0_36px_70px_rgba(0,0,0,0.55)]"
    >
      <div className="flex h-[57px] items-center border-b border-[#c8c8c8] bg-[#faf2ed] pl-4">
        <TrafficLights close="border-[#e2463f] bg-[#ff5f57]" />
        <h2 className="flex-1 pr-[119px] text-center text-[26px] font-bold text-[#4a4a4a]">Noise Reduction</h2>
      </div>
      <div className="px-4 pt-3">
        <h3 className="pl-[22px] text-[22px] leading-6">Step 1</h3>
        <section className="mt-[7px] rounded-[10px] border border-[#dadada] bg-[#e4e4e4] px-[33px] pt-[33px] pb-2.5">
          <p className="leading-[34px]">
            Select a few seconds of just noise so Audacity knows what to filter out,<br />
            then click Get Noise Profile:
          </p>
          <div className="mt-5 flex justify-center pl-2">
            <div className="relative">
              <DialogButton className="w-[244px]">Get Noise Profile</DialogButton>
              <svg className="absolute top-[27px] left-[207px] h-9 w-7 drop-shadow-[0_2px_2px_rgba(0,0,0,0.35)]">
                <path d="M2 2V28L8 23L13 34L18 32L13 21L21 20Z" stroke="#fff" strokeWidth="2" />
              </svg>
            </div>
          </div>
        </section>
        <h3 className="mt-8 pl-[22px] text-[22px] leading-6">Step 2</h3>
        <section className="mt-[7px] rounded-[10px] border border-[#dadada] bg-[#e4e4e4] pt-[33px] pr-[27px] pb-[9px] pl-[33px]">
          <p className="leading-[34px]">
            Select all of the audio you want filtered, choose how much noise you want<br />
            filtered out, and then click 'OK' to reduce noise.
          </p>
          <div className="mt-[42px]">
            <EffectRow id="reduction" label="Noise reduction (dB):" value="6" min={0} max={48} position={6} focused />
            <EffectRow id="sensitivity" label="Sensitivity:" value="4.00" min={0} max={24} position={4} />
            <EffectRow id="smoothing" label="Frequency smoothing (bands):" value="1" min={0} max={12} position={1} />
          </div>
          <div className="mt-2 flex h-10 items-center pl-[250px]">
            <span className="w-[104px] pt-0.5">Noise:</span>
            <div className="flex gap-[34px]">
              <NoiseRadio label="Reduce" checked={noiseMode === 'Reduce'} onChange={() => setNoiseMode('Reduce')} />
              <NoiseRadio label="Residue" checked={noiseMode === 'Residue'} onChange={() => setNoiseMode('Residue')} />
            </div>
          </div>
        </section>
      </div>
      <div className="flex items-center pt-[51px] pr-[22px] pb-[39px] pl-10">
        <DialogButton disabled className="w-[164px]">Preview</DialogButton>
        <DialogButton className="ml-auto w-[164px]">Cancel</DialogButton>
        <DialogButton disabled className="ml-7 w-[164px]">OK</DialogButton>
        <button className="ml-[34px] size-[42px] rounded-full bg-[#6496ff] text-3xl font-medium text-white shadow-[0_-1px_1px_rgba(0,0,0,0.15)]">?</button>
      </div>
    </div>
  );
}

export default function App() {
  return (
    <div className="relative min-h-screen overflow-hidden bg-[#636685] font-[Inter,sans-serif] text-black">
      <div className="bg-[linear-gradient(to_right,#142850,#2c2448_37%,#f0a030_37%,#e88040)] pt-0.5">
        <header className="flex h-[57px] items-center rounded-tl-[20px] border-b border-[#9a9a9a] bg-[#f8efed] pl-4">
          <TrafficLights close="border-[#c5bebc] bg-[#ddd5d3]" />
          <h1 className="flex-1 pl-[258px] text-center text-[26px] font-bold text-[#4a4a4a]">Audio 1</h1>
        </header>
      </div>
      <div className="font-['Liberation_Sans',sans-serif] [&_select]:font-[Inter,sans-serif]">
        <Toolbars />
        <Timeline />
        <Track />
      </div>
      <NoiseReductionDialog />
    </div>
  );
}
